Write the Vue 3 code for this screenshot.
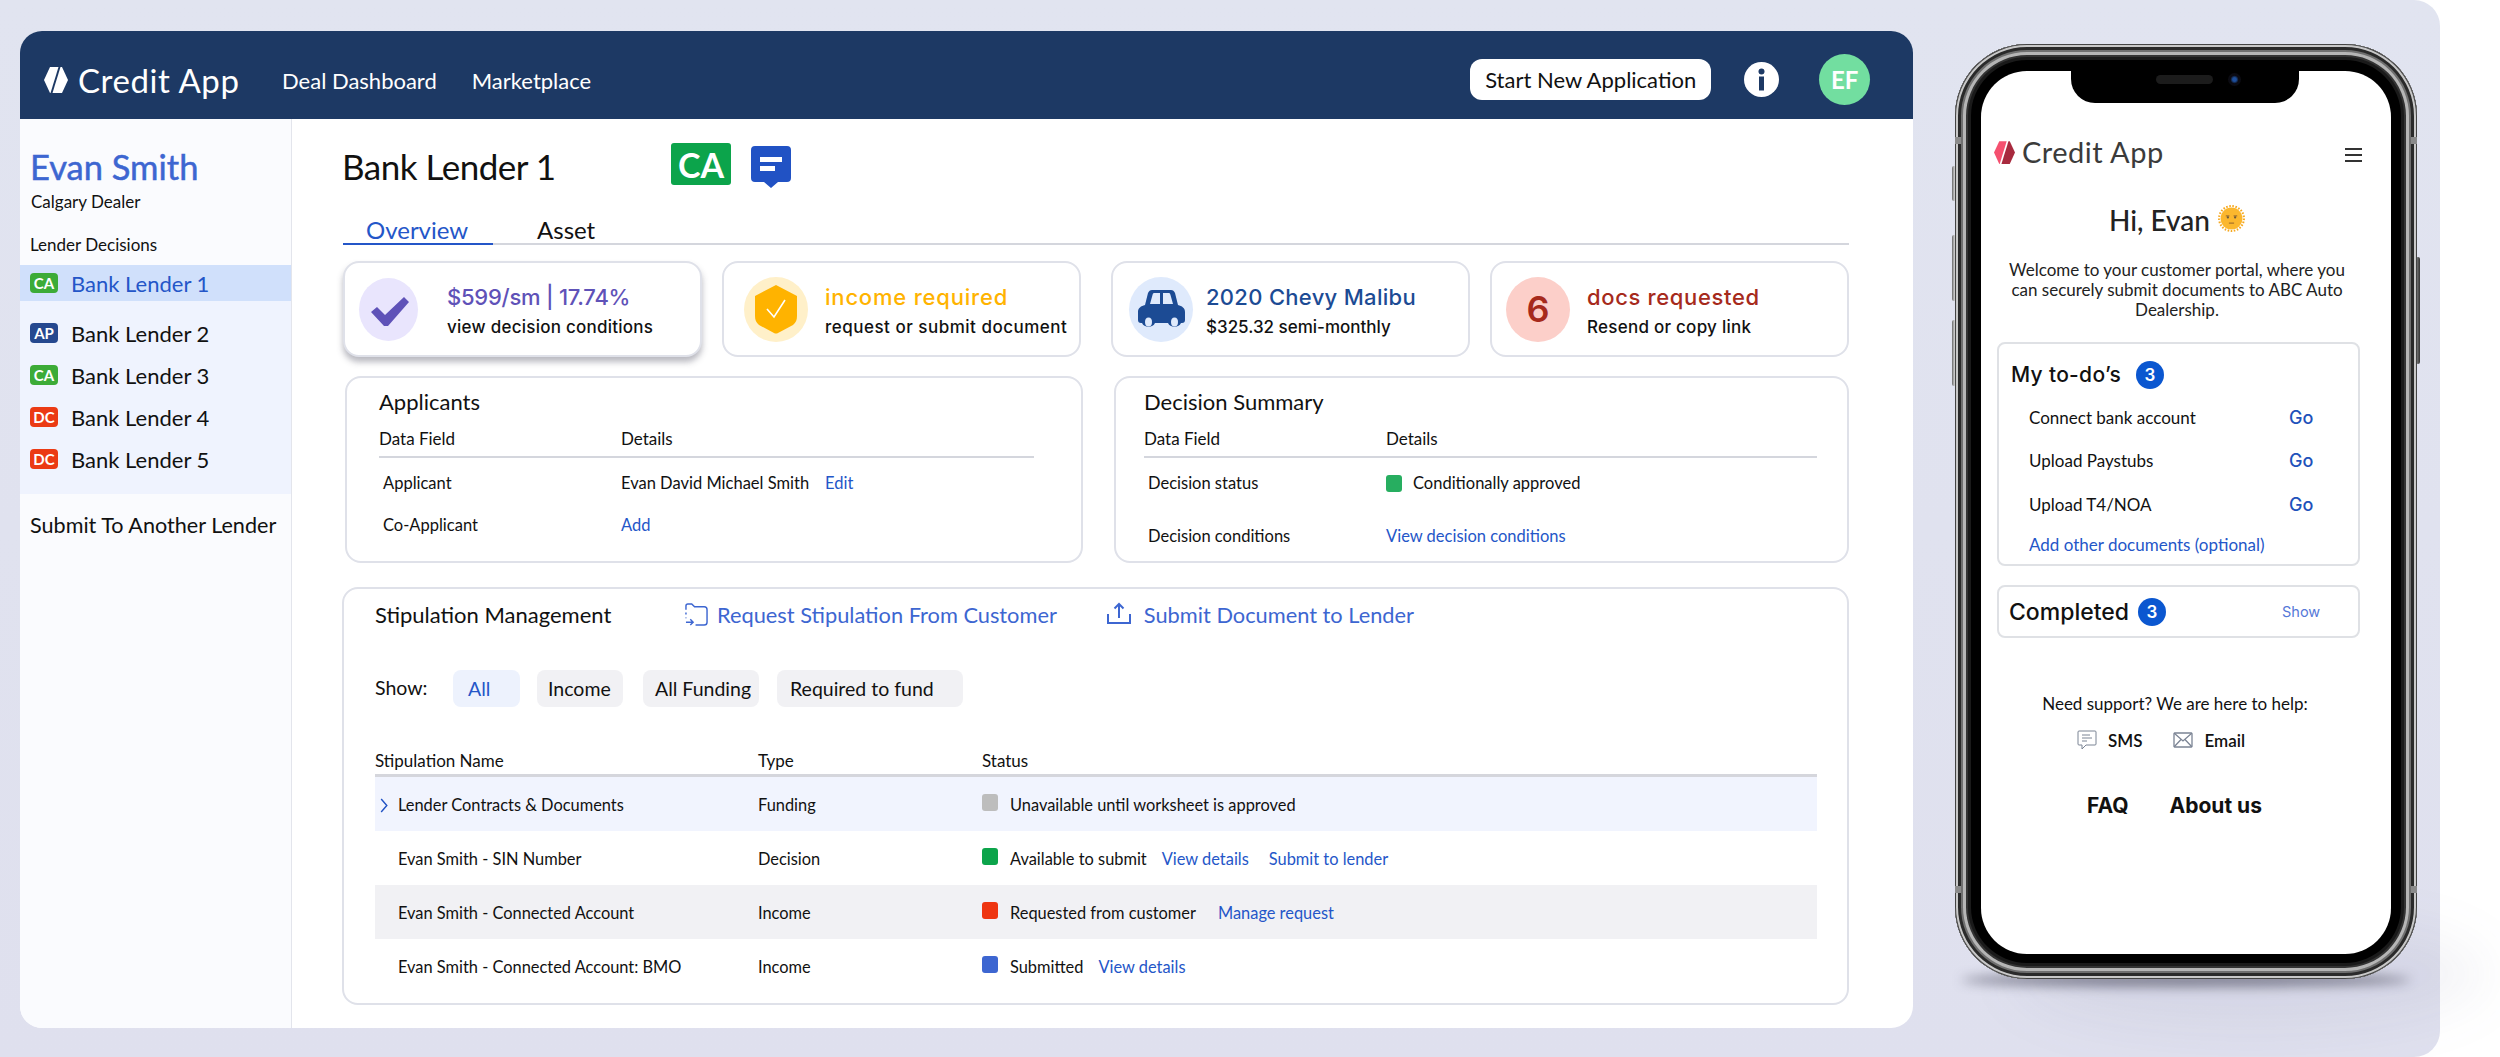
<script setup>
const lenders = [
  { code: 'AP', tone: 'ap', name: 'Bank Lender 2' },
  { code: 'CA', tone: 'ca', name: 'Bank Lender 3' },
  { code: 'DC', tone: 'dc', name: 'Bank Lender 4' },
  { code: 'DC', tone: 'dc', name: 'Bank Lender 5' }
]
const stips = [
  { name: 'Lender Contracts & Documents', type: 'Funding', dot: 'grey', status: 'Unavailable until worksheet is approved', links: [], rowTone: 'blue', open: true },
  { name: 'Evan Smith - SIN Number', type: 'Decision', dot: 'green', status: 'Available to submit', links: ['View details', 'Submit to lender'], rowTone: '' },
  { name: 'Evan Smith - Connected Account', type: 'Income', dot: 'red', status: 'Requested from customer', links: ['Manage request'], rowTone: 'grey', wide: true },
  { name: 'Evan Smith - Connected Account: BMO', type: 'Income', dot: 'blue', status: 'Submitted', links: ['View details'], rowTone: '' }
]
const todos = ['Connect bank account', 'Upload Paystubs', 'Upload T4/NOA']
const chips = [
  { label: 'All', cls: 'chip-all' },
  { label: 'Income', cls: 'chip-income' },
  { label: 'All Funding', cls: 'chip-funding' },
  { label: 'Required to fund', cls: 'chip-required' }
]
</script>

<template>
  <div class="frame">
    <div class="app">
      <header class="topbar">
        <div class="brand">
          <svg class="brand-mark" viewBox="0 0 24 26"><polygon fill="#fff" points="6,0 14.5,0 6.5,26 6,26 0,13" /><polygon fill="#fff" points="16.5,0 18,0 24,13 18,26 8.5,26" /></svg>
          <span class="brand-text">Credit App</span>
        </div>
        <nav class="nav"><span>Deal Dashboard</span><span>Marketplace</span></nav>
        <button class="start">Start New Application</button>
        <svg class="info" viewBox="0 0 35 35"><circle cx="17.5" cy="17.5" r="17.5" fill="#fff" /><circle cx="17.5" cy="9.5" r="3" fill="#1d3964" /><rect x="15" y="14.5" width="5" height="14" fill="#1d3964" /></svg>
        <div class="avatar">EF</div>
      </header>
      <div class="body">
        <aside class="side">
          <div class="side-name">Evan Smith</div>
          <div class="side-place">Calgary Dealer</div>
          <div class="side-label">Lender Decisions</div>
          <div class="lender lender-on"><span class="code ca">CA</span><span>Bank Lender 1</span></div>
          <div class="lender-list">
            <div v-for="l in lenders" :key="l.name" class="lender"><span class="code" :class="l.tone">{{ l.code }}</span><span>{{ l.name }}</span></div>
          </div>
          <div class="side-submit">Submit To Another Lender</div>
        </aside>
        <main class="main">
          <div class="title-row">
            <h1 class="title">Bank Lender 1</h1>
            <span class="big-ca">CA</span>
            <svg class="chat" viewBox="0 0 40 42"><path fill="#2152c4" d="M4 0h32a4 4 0 0 1 4 4v28a4 4 0 0 1-4 4H27l-7 6-7-6H4a4 4 0 0 1-4-4V4a4 4 0 0 1 4-4z" /><rect x="9" y="11" width="22" height="5" fill="#fff" /><rect x="9" y="20" width="15" height="5" fill="#fff" /></svg>
          </div>
          <div class="tabs"><span class="tab tab-on">Overview</span><span class="tab tab-asset">Asset</span></div>

          <div class="cards">
            <div class="card card-raised">
              <div class="blob blob-purple">
                <svg class="tick" viewBox="0 0 38 29"><polygon fill="#5f52b8" points="0,15 6,10 14,18 33,0 38,5 17,29 13,29" /></svg>
              </div>
              <div class="card-text"><div class="card-head purple">$599/sm | 17.74%</div><div class="card-sub sub-view">view decision conditions</div></div>
            </div>
            <div class="card">
              <div class="blob blob-amber">
                <svg class="shield" viewBox="0 0 42 49"><path fill="#ffb300" d="M21 0l21 11v20c0 4-1 6-4 9L23 48a4 4 0 0 1-4 0L4 40c-3-3-4-5-4-9V11z" /><path fill="none" stroke="#fff" stroke-width="1.6" d="M12 24l7 8 11-17" /></svg>
              </div>
              <div class="card-text"><div class="card-head amber">income required</div><div class="card-sub sub-request">request or submit document</div></div>
            </div>
            <div class="card card-third">
              <div class="blob blob-blue">
                <svg class="car" viewBox="0 0 47 39">
                  <path fill="#1c4b94" d="M14 0h19c2 0 3 1 4 3l3 12c4 1 7 3 7 7v8c0 2-1 3-3 3h-1a7 6 0 0 1-13 0H17a7 6 0 0 1-13 0H3c-2 0-3-1-3-3v-8c0-4 3-6 7-7l3-12c1-2 2-3 4-3z" />
                  <path fill="#dfeafc" d="M16 3h6v11H12l2.500-9c.3-1.200.7-2 1.500-2zM25 3h6c.8 0 1.200.8 1.500 2l2.500 9H25z" />
                  <ellipse cx="10.500" cy="32" rx="3.500" ry="4.500" fill="#dfeafc" /><ellipse cx="36.500" cy="32" rx="3.500" ry="4.500" fill="#dfeafc" />
                </svg>
              </div>
              <div class="card-text"><div class="card-head navy">2020 Chevy Malibu</div><div class="card-sub">$325.32 semi-monthly</div></div>
            </div>
            <div class="card card-fourth">
              <div class="blob blob-red"><span class="six">6</span></div>
              <div class="card-text"><div class="card-head crimson">docs requested</div><div class="card-sub sub-view">Resend or copy link</div></div>
            </div>
          </div>

          <div class="panels">
            <section class="panel panel-left">
              <h2 class="panel-title">Applicants</h2>
              <div class="kv kv-head"><span>Data Field</span><span>Details</span></div>
              <div class="kv kv-row"><span class="kv-key">Applicant</span><span>Evan David Michael Smith<a class="link edit">Edit</a></span></div>
              <div class="kv kv-row kv-row2"><span class="kv-key">Co-Applicant</span><a class="link">Add</a></div>
            </section>
            <section class="panel panel-right">
              <h2 class="panel-title">Decision Summary</h2>
              <div class="kv kv-head"><span>Data Field</span><span>Details</span></div>
              <div class="kv kv-row"><span class="kv-key">Decision status</span><span class="approved"><i class="dot dot-approved"></i>Conditionally approved</span></div>
              <div class="kv kv-row kv-row3"><span class="kv-key">Decision conditions</span><a class="link">View decision conditions</a></div>
            </section>
          </div>

          <section class="stips">
            <div class="stips-head">
              <h2 class="stips-title">Stipulation Management</h2>
              <svg class="folder" viewBox="0 0 24 24" fill="none" stroke="#3d66d1" stroke-width="1.500"><path d="M1 7V3a2 2 0 0 1 2-2h4l3 3h10a3 3 0 0 1 3 3v13a3 3 0 0 1-3 3h-9M1 10v2M1 15v1" /><path d="M1 20h7M5.500 17l3 3-3 3" /></svg>
              <span class="action">Request Stipulation From Customer</span>
              <svg class="upload" viewBox="0 0 24 24" fill="none" stroke="#3d66d1" stroke-width="2"><path d="M1 13v9h22v-9M1 22h22M12 17V3M7.500 7.500L12 3l4.500 4.500" /></svg>
              <span class="action">Submit Document to Lender</span>
            </div>
            <div class="filters">
              <span class="show">Show:</span>
              <span v-for="c in chips" :key="c.label" class="chip" :class="c.cls">{{ c.label }}</span>
            </div>
            <div class="thead"><span>Stipulation Name</span><span>Type</span><span>Status</span></div>
            <div v-for="s in stips" :key="s.name" class="trow" :class="s.rowTone">
              <span class="tname">
                <svg v-if="s.open" class="chev" viewBox="0 0 8 16" fill="none" stroke="#2152c4" stroke-width="1.500"><path d="M1 1l6 7-6 7" /></svg>{{ s.name }}
              </span>
              <span>{{ s.type }}</span>
              <span class="tstatus">
                <i class="dot" :class="'dot-' + s.dot"></i><span>{{ s.status }}</span>
                <a v-for="l in s.links" :key="l" class="link tlink" :class="{ 'tlink-wide': s.wide }">{{ l }}</a>
              </span>
            </div>
          </section>
        </main>
      </div>
    </div>

    <div class="phone">
      <i class="phone-glow"></i>
      <i class="phone-shadow"></i>
      <i class="btn btn-a"></i><i class="btn btn-b"></i><i class="btn btn-c"></i><i class="btn btn-d"></i>
      <div class="phone-band">
        <i class="seam seam-tl"></i><i class="seam seam-tr"></i><i class="seam seam-bl"></i><i class="seam seam-br"></i>
        <div class="screen">
          <div class="notch"><i class="speaker"></i><i class="camera"></i></div>
          <div class="m-top">
            <svg class="m-mark" viewBox="0 0 24 26"><polygon fill="#f5506f" points="6,0 14.5,0 6.5,26 6,26 0,13" /><polygon fill="#a82a3e" points="16.5,0 18,0 24,13 18,26 8.5,26" /></svg>
            <span class="m-brand">Credit App</span>
            <svg class="burger" viewBox="0 0 17 14"><path fill="#333" d="M0 0h17v2H0zM0 6h17v2H0zM0 12h17v2H0z" /></svg>
          </div>
          <div class="m-hi">
            <span>Hi, Evan</span>
            <svg class="sun" viewBox="0 0 26 26">
              <circle cx="13" cy="13" r="12" fill="none" stroke="#f6a81f" stroke-width="2" stroke-dasharray="1.500 1.500" />
              <circle cx="13" cy="13" r="10.500" fill="#fbb72e" />
              <path d="M7.500 10.500h3.500M15 10.500h3.500M10.500 17.500h5" stroke="#a9752a" stroke-width="1.200" fill="none" />
              <circle cx="9.500" cy="12" r="1.100" fill="#6c5a3c" /><circle cx="16.500" cy="12" r="1.100" fill="#6c5a3c" />
            </svg>
          </div>
          <p class="m-welcome">Welcome to your customer portal, where you<br />can securely submit documents to ABC Auto<br />Dealership.</p>
          <section class="m-card m-todo">
            <div class="m-head"><span>My to-do’s</span><b class="count">3</b></div>
            <div v-for="t in todos" :key="t" class="m-row"><span>{{ t }}</span><a class="go">Go</a></div>
            <a class="m-add">Add other documents (optional)</a>
          </section>
          <section class="m-card m-done">
            <span class="m-done-label">Completed</span><b class="count">3</b><a class="m-show">Show</a>
          </section>
          <p class="m-help">Need support? We are here to help:</p>
          <div class="m-contact">
            <svg class="m-ic" viewBox="0 0 20 20" fill="none" stroke="#7b8494" stroke-width="1"><path d="M2 1h16a1 1 0 0 1 1 1v12a1 1 0 0 1-1 1H9l-4 4v-4H2a1 1 0 0 1-1-1V2a1 1 0 0 1 1-1z" /><path d="M5 5h8M5 8h10M5 11h5" /></svg>
            <span class="m-sms">SMS</span>
            <svg class="m-ic" viewBox="0 0 20 16" fill="none" stroke="#7b8494" stroke-width="1.300"><rect x="1" y="1" width="18" height="14" rx="1" /><path d="M1 1l9 8 9-8M1 15l7-7.500M19 15l-7-7.500" /></svg>
            <span>Email</span>
          </div>
          <div class="m-foot"><span>FAQ</span><span>About us</span></div>
        </div>
      </div>
    </div>
  </div>
</template>

<style>
html, body { margin: 0; background: #fff; }
</style>

<style scoped>
* { box-sizing: border-box; }
.frame {
  width: 2440px; height: 1057px; display: flex; align-items: flex-start;
  padding: 31px 0 0 20px;
  background: linear-gradient(#e1e4f0, #dfe0ee);
  border-radius: 0 26px 26px 0;
  font-family: Lato, "Liberation Sans", sans-serif; color: #111;
  font-variant-ligatures: common-ligatures;
  overflow: visible;
}
h1, h2, p { margin: 0; font-weight: 400; }
a { cursor: pointer; }
.app { width: 1893px; height: 997px; background: #fff; border-radius: 22px; overflow: hidden; flex: none; display: flex; flex-direction: column; }
.topbar { height: 88px; background: #1d3964; display: flex; align-items: center; color: #fff; flex: none; padding: 9px 0 0 24px; }
.brand { display: flex; align-items: center; width: 238px; }
.brand-mark { width: 24px; height: 26px; margin-right: 10px; }
.brand-text { font-size: 33px; letter-spacing: .6px; line-height: 40px; }
.nav { display: flex; gap: 35px; font-size: 22px; margin-top: 2px; }
.start { margin-left: 879px; width: 241px; height: 41px; border: 0; border-radius: 12px; background: #fff; font: 400 22px Lato, sans-serif; color: #111; padding: 0; }
.info { width: 35px; height: 35px; margin-left: 33px; }
.avatar { width: 51px; height: 51px; margin-left: 40px; border-radius: 50%; background: #72dea0; color: #fff; font-size: 24px; font-weight: 700; display: flex; align-items: center; justify-content: center; }

.body { flex: 1; display: flex; min-height: 0; }
.side { width: 272px; flex: none; background: #fafbfe; border-right: 1px solid #e3e5ec; }
.side-name { color: #3d66d1; font-size: 34.500px; line-height: 44px; margin: 26px 0 0 10px; -webkit-text-stroke: .5px #3d66d1; }
.side-place { font-size: 17px; line-height: 20px; margin: 3px 0 0 11px; }
.side-label { font-size: 17px; line-height: 20px; margin: 23px 0 0 10px; }
.lender { height: 42px; display: flex; align-items: center; font-size: 22px; padding-left: 10px; }
.lender .code { margin-right: 13px; }
.lender-on { height: 36px; margin-top: 10px; background: #d0e0fb; color: #2456c8; }
.lender-list { background: #eff3fe; padding: 11px 0 14px; }
.code { width: 28px; height: 20px; border-radius: 4px; color: #fff; font-size: 15px; font-weight: 700; display: flex; align-items: center; justify-content: center; }
.ca { background: #3cab37; }
.ap { background: #25488f; }
.dc { background: #eb3a14; }
.side-submit { font-size: 21.600px; margin: 18px 0 0 10px; line-height: 26px; white-space: nowrap; }

.main { flex: 1; padding: 24px 64px 0 51px; min-width: 0; }
.title-row { display: flex; align-items: flex-start; height: 42px; }
.title { width: 328px; font-size: 35px; letter-spacing: -.5px; line-height: 46px; margin-left: -1px; flex: none; }
.big-ca { width: 60px; height: 42px; background: #0ca44b; color: #fff; font-size: 34px; font-weight: 700; border-radius: 3px; display: flex; align-items: center; justify-content: center; margin-left: 1px; }
.chat { width: 40px; height: 42px; margin: 3px 0 0 20px; }
.tabs { height: 60px; margin-top: 0; border-bottom: 2px solid #d4d6dd; display: flex; align-items: flex-end; }
.tab { font-size: 24px; height: 31px; line-height: 36px; }
.tab-on { width: 150px; color: #2456c8; padding-left: 23px; border-bottom: 2px solid #2456c8; margin-bottom: -2px; height: 33px; }
.tab-asset { margin-left: 44px; }

.cards { display: grid; grid-template-columns: 359px 359px 369px 359px; column-gap: 20px; margin-top: 16px; }
.card { height: 96px; border: 2px solid #dfe1e9; border-radius: 16px; background: #fff; display: flex; align-items: center; padding-left: 20px; }
.card-raised { box-shadow: 0 5px 6px rgba(70, 70, 90, .38); padding-left: 14px; }
.card-third { margin-left: 10px; padding-left: 16px; }
.card-fourth { padding-left: 14px; }
.blob { width: 64px; height: 65px; border-radius: 50%; flex: none; display: flex; align-items: center; justify-content: center; }
.blob-purple { width: 59px; height: 63px; background: #e9e5fd; }
.blob-amber { background: #fff0c9; }
.blob-blue { background: #dfeafc; }
.blob-red { background: #fccfc9; }
.tick { width: 38px; height: 29px; margin: 4px 0 0 3px; }
.shield { width: 42px; height: 49px; }
.car { width: 47px; height: 39px; }
.six { color: #a62a1c; font: 600 36px Inter, sans-serif; }
.card-text { margin-left: 17px; padding-top: 3px; }
.card-raised .card-text { margin-left: 29px; }
.card-third .card-text { margin-left: 13px; }
.card-head { font: 500 22px/28px Inter, sans-serif; white-space: nowrap; }
.card-sub { font: 500 17px/22px Inter, sans-serif; margin-top: 5px; white-space: nowrap; }
.sub-view { letter-spacing: .25px; }
.sub-request { letter-spacing: .5px; }
.purple { color: #5f52b8; letter-spacing: -.25px; }
.amber { color: #ffb300; letter-spacing: .8px; }
.navy { color: #1c4b94; letter-spacing: .3px; }
.crimson { color: #a62a1c; letter-spacing: .65px; }

.panels { display: flex; margin-top: 19px; }
.panel { height: 187px; border: 2px solid #dfe1e9; border-radius: 16px; padding: 10px 0 0 32px; }
.panel-left { width: 738px; margin-left: 2px; }
.panel-right { width: 735px; margin-left: 31px; padding-left: 28px; }
.panel-title { font-size: 22px; line-height: 28px; }
.kv { display: grid; font-size: 17px; line-height: 20px; }
.panel-left .kv { grid-template-columns: 242px 1fr; width: 655px; }
.panel-right .kv { grid-template-columns: 242px 1fr; width: 673px; }
.kv-head { margin-top: 13px; padding-bottom: 4px; height: 29px; border-bottom: 2px solid #d4d6dd; }
.kv-row { margin-top: 15px; font-size: 16.500px; }
.kv-row2 { margin-top: 22px; }
.kv-row3 { margin-top: 33px; }
.kv-key { padding-left: 4px; }
.link { color: #2456c8; }
.edit { margin-left: 16px; }
.approved { display: flex; align-items: center; }
.dot { width: 16px; height: 17px; border-radius: 3px; flex: none; display: block; }
.dot-approved { background: #27ae60; margin-right: 11px; }
.dot-grey { background: #bdbdbd; }
.dot-green { background: #0ca44b; }
.dot-red { background: #ee3510; }
.dot-blue { background: #3d66d1; }

.stips { width: 1507px; height: 418px; margin-top: 24px; margin-left: -1px; border: 2px solid #dfe1e9; border-radius: 16px; padding: 0 30px 0 31px; }
.stips-head { display: flex; align-items: center; height: 50px; }
.stips-title { width: 310px; font-size: 22px; }
.folder { width: 23px; height: 23px; margin-right: 9px; }
.upload { width: 24px; height: 24px; margin: -2px 13px 0 50px; }
.action { font-size: 21.800px; color: #3d66d1; white-space: nowrap; }
.filters { display: flex; align-items: center; height: 37px; margin-top: 31px; font-size: 19.500px; }
.show { width: 78px; margin-top: -3px; }
.chip { height: 37px; border-radius: 8px; background: #f1f1f4; display: flex; align-items: center; }
.chip-all { width: 67px; padding-left: 15px; background: #edf2fd; color: #2456c8; }
.chip-income { width: 86px; padding-left: 11px; margin-left: 17px; }
.chip-funding { width: 116px; padding-left: 12px; margin-left: 20px; }
.chip-required { width: 186px; padding-left: 13px; margin-left: 18px; }
.thead, .trow { display: grid; grid-template-columns: 383px 224px 1fr; align-items: center; }
.thead { height: 52px; margin-top: 18px; padding-top: 21px; border-bottom: 3px solid #d5d6dc; font-size: 17px; }
.trow { height: 54px; font-size: 16.400px; }
.trow.blue { background: #f1f4fe; }
.trow.grey { background: #f1f1f4; }
.tname { position: relative; padding-left: 23px; white-space: nowrap; }
.chev { position: absolute; left: 5px; top: 3px; width: 8px; height: 15px; }
.tstatus { display: flex; align-items: center; white-space: nowrap; }
.tstatus .dot { margin: -3px 12px 0 0; }
.tlink { margin-left: 15px; }
.tlink + .tlink { margin-left: 20px; }
.tlink-wide { margin-left: 22px; }

.phone { position: relative; width: 462px; height: 935px; margin: 13px 0 0 42px; flex: none; }
.phone-glow { position: absolute; left: 60px; right: -70px; bottom: -50px; height: 110px; background: rgba(90, 90, 130, .07); filter: blur(26px); border-radius: 50%; }
.phone-shadow { position: absolute; left: 6px; right: 6px; bottom: -8px; height: 14px; background: rgba(40, 40, 60, .5); filter: blur(6px); border-radius: 50%; }
.btn { position: absolute; width: 4px; background: linear-gradient(90deg, #666, #ccc 60%, #888); border-radius: 2px; }
.btn-a { left: -3px; top: 122px; height: 35px; }
.btn-b { left: -3px; top: 191px; height: 66px; }
.btn-c { left: -3px; top: 276px; height: 66px; }
.btn-d { right: -3px; top: 213px; height: 107px; background: linear-gradient(90deg, #888, #333); }
.phone-band {
  position: relative; width: 100%; height: 100%; padding: 27px 26px 25px 26px; border-radius: 72px; background: #000;
  box-shadow: inset 0 0 0 1px #444, inset 0 0 0 3px #c8c8c8, inset 0 0 0 6px #2a2a2a, inset 0 0 0 8px #6f6f6f, inset 0 0 0 11px #b5b5b5, inset 0 0 0 13px #333, inset 0 0 0 16px #1a1a1a;
}
.seam { position: absolute; width: 6px; height: 7px; background: #8a8a8a; }
.seam-tl { left: 0; top: 93px; }
.seam-tr { right: 0; top: 93px; }
.seam-bl { left: 0; bottom: 86px; }
.seam-br { right: 0; bottom: 86px; }
.screen { position: relative; height: 100%; border-radius: 46px; background: #fff; overflow: hidden; }
.notch { position: absolute; left: 90px; top: -1px; width: 228px; height: 33px; background: #000; border-radius: 0 0 24px 24px; }
.speaker { position: absolute; left: 85px; top: 5px; width: 57px; height: 9px; border-radius: 5px; background: #1c1c1c; }
.camera { position: absolute; left: 157px; top: 3px; width: 13px; height: 13px; border-radius: 50%; background: radial-gradient(#1e4f9c 20%, #0b0b12 45%); }
.m-top { display: flex; align-items: center; height: 40px; margin-top: 61px; padding: 0 29px 0 13px; }
.m-mark { width: 21px; height: 23px; margin-right: 7px; }
.m-brand { font-size: 29px; color: #3b3b3b; letter-spacing: .5px; line-height: 40px; }
.burger { width: 17px; height: 14px; margin-left: auto; margin-top: 6px; }
.m-hi { display: flex; align-items: center; justify-content: center; gap: 8px; width: 392px; height: 34px; margin-top: 31px; font-size: 28px; font-weight: 500; color: #222; }
.sun { width: 27px; height: 27px; margin-top: -4px; }
.m-welcome { width: 392px; margin-top: 23px; font-size: 17px; line-height: 20px; text-align: center; color: #222; }
.m-card { width: 363px; margin-left: 16px; border: 2px solid #dfe1e5; border-radius: 8px; }
.m-todo { height: 224px; margin-top: 22px; padding: 17px 0 0 12px; }
.m-head { display: flex; align-items: center; font: 500 21px/28px Inter, sans-serif; letter-spacing: .3px; }
.count { width: 28px; height: 28px; border-radius: 50%; background: #0b57d0; color: #fff; font: 600 17px Inter, sans-serif; display: flex; align-items: center; justify-content: center; }
.m-head .count { margin-left: 15px; }
.m-row { position: relative; display: flex; height: 43px; margin-left: 18px; font-size: 17px; align-items: center; padding-top: 8px; }
.m-row:nth-of-type(2) { margin-top: 3px; }
.m-row:nth-of-type(4) { padding-top: 10px; }
.go { position: absolute; left: 260px; color: #1f52bb; font: 500 18px Inter, sans-serif; }
.m-add { display: block; margin: 13px 0 0 18px; font-size: 17px; color: #2456c8; }
.m-done { height: 53px; margin-top: 19px; display: flex; align-items: center; padding: 0 10px; }
.m-done-label { font: 500 23px Inter, sans-serif; width: 129px; }
.m-show { margin-left: 116px; color: #5578d8; font: 400 14.500px Inter, sans-serif; }
.m-help { width: 392px; text-align: center; font-size: 17px; line-height: 22px; margin: 55px 0 0 -2px; }
.m-contact { display: flex; align-items: center; height: 22px; margin: 14px 0 0 96px; font-size: 17px; font-weight: 600; }
.m-ic { width: 20px; height: 20px; margin-right: 11px; }
.m-sms { margin-right: 31px; }
.m-foot { display: flex; gap: 41px; margin: 43px 0 0 106px; font: 700 21px/24px Inter, sans-serif; }
</style>
